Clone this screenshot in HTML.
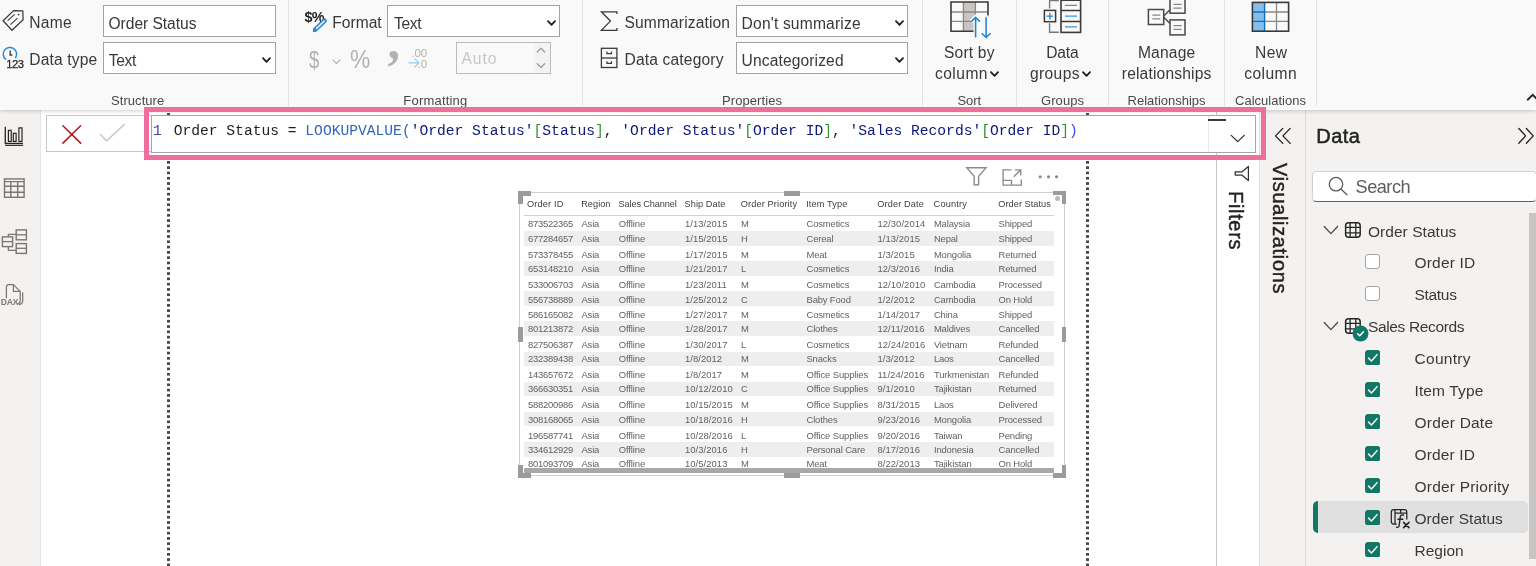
<!DOCTYPE html>
<html lang="en"><head><meta charset="utf-8"><title>Power BI - Order Status</title>
<style>
html,body{margin:0;padding:0}
body{width:1536px;height:566px;overflow:hidden;position:relative;background:#fff;font-family:"Liberation Sans",sans-serif;color:#252423}
#app{position:absolute;left:0;top:0;width:1536px;height:566px;overflow:hidden;will-change:opacity}
.a{position:absolute;box-sizing:border-box}
.t{position:absolute;white-space:pre;line-height:1}
.mono{font-family:"Liberation Mono",monospace}
.sep{position:absolute;top:0;width:1px;height:106px;background:#e2e2e2}
.inp{background:#fff;border:1px solid #a4a2a0}
</style></head><body>
<div id="app">
<div class="a " style="left:0.0px;top:110.0px;width:41.0px;height:456.0px;background:#f3f2f1;border-right:1px solid #e6e5e4"></div>
<div class="a " style="left:1215.5px;top:110.0px;width:44.0px;height:456.0px;background:#fff;border-left:1px solid #c8c6c4"></div>
<div class="a " style="left:1259.0px;top:110.0px;width:46.5px;height:456.0px;background:#f3f2f1;border-left:1px solid #e1dfdd"></div>
<div class="a " style="left:1305.0px;top:110.0px;width:231.0px;height:456.0px;background:#f3f2f1;border-left:1px solid #dddbd9"></div>
<div class="a " style="left:0.0px;top:0.0px;width:1536.0px;height:109.5px;background:#f9f9f9;box-shadow:0 1px 4px rgba(0,0,0,.2)"></div>
<div class="sep" style="left:288.3px"></div>
<div class="sep" style="left:582.0px"></div>
<div class="sep" style="left:922.0px"></div>
<div class="sep" style="left:1016.3px"></div>
<div class="sep" style="left:1108.0px"></div>
<div class="sep" style="left:1224.0px"></div>
<div class="sep" style="left:1316.0px"></div>
<span class="t " style="left:29.3px;top:14.89px;font-size:15.60px;color:#3a3938;letter-spacing:0.296px;">Name</span>
<span class="t " style="left:29.3px;top:52.09px;font-size:15.60px;color:#3a3938;letter-spacing:0.154px;">Data type</span>
<div class="a inp" style="left:103.0px;top:5.0px;width:172.5px;height:32.0px;"></div>
<div class="a inp" style="left:103.0px;top:42.0px;width:172.5px;height:32.0px;"></div>
<span class="t " style="left:108.5px;top:15.89px;font-size:15.60px;color:#3a3938;letter-spacing:-0.039px;">Order Status</span>
<span class="t " style="left:108.8px;top:52.99px;font-size:15.60px;color:#3a3938;letter-spacing:-0.336px;">Text</span>
<span class="t " style="left:111.0px;top:93.70px;font-size:13.00px;color:#4a4948;letter-spacing:0.057px;">Structure</span>
<span class="t " style="left:332.2px;top:14.89px;font-size:15.60px;color:#3a3938;letter-spacing:0.019px;">Format</span>
<div class="a inp" style="left:387.0px;top:5.0px;width:172.8px;height:32.0px;"></div>
<span class="t " style="left:394.0px;top:15.89px;font-size:15.60px;color:#3a3938;letter-spacing:-0.336px;">Text</span>
<div class="a " style="left:456.0px;top:42.0px;width:94.5px;height:32.0px;background:#f9f9f9;border:1px solid #bdbbb9"></div>
<span class="t " style="left:461.5px;top:51.09px;font-size:15.60px;color:#c8c6c4;letter-spacing:0.970px;">Auto</span>
<span class="t " style="left:403.3px;top:93.70px;font-size:13.00px;color:#4a4948;letter-spacing:0.207px;">Formatting</span>
<span class="t " style="left:624.5px;top:14.89px;font-size:15.60px;color:#3a3938;letter-spacing:0.122px;">Summarization</span>
<span class="t " style="left:624.5px;top:52.09px;font-size:15.60px;color:#3a3938;letter-spacing:0.157px;">Data category</span>
<div class="a inp" style="left:735.8px;top:5.0px;width:172.4px;height:32.0px;"></div>
<div class="a inp" style="left:735.8px;top:42.0px;width:172.4px;height:32.0px;"></div>
<span class="t " style="left:741.6px;top:15.89px;font-size:15.60px;color:#3a3938;letter-spacing:0.176px;">Don't summarize</span>
<span class="t " style="left:741.6px;top:52.99px;font-size:15.60px;color:#3a3938;letter-spacing:0.118px;">Uncategorized</span>
<span class="t " style="left:722.0px;top:93.70px;font-size:13.00px;color:#4a4948;letter-spacing:0.083px;">Properties</span>
<span class="t " style="left:944.0px;top:45.29px;font-size:15.60px;color:#3a3938;letter-spacing:0.180px;">Sort by</span>
<span class="t " style="left:935.0px;top:65.89px;font-size:15.60px;color:#3a3938;letter-spacing:0.443px;">column</span>
<span class="t " style="left:957.5px;top:93.70px;font-size:13.00px;color:#4a4948;letter-spacing:-0.114px;">Sort</span>
<span class="t " style="left:1046.2px;top:45.29px;font-size:15.60px;color:#3a3938;letter-spacing:-0.150px;">Data</span>
<span class="t " style="left:1030.0px;top:65.89px;font-size:15.60px;color:#3a3938;letter-spacing:0.361px;">groups</span>
<span class="t " style="left:1041.0px;top:93.70px;font-size:13.00px;color:#4a4948;letter-spacing:0.073px;">Groups</span>
<span class="t " style="left:1137.9px;top:45.29px;font-size:15.60px;color:#3a3938;letter-spacing:0.185px;">Manage</span>
<span class="t " style="left:1121.8px;top:65.89px;font-size:15.60px;color:#3a3938;letter-spacing:0.160px;">relationships</span>
<span class="t " style="left:1127.6px;top:93.70px;font-size:13.00px;color:#4a4948;letter-spacing:-0.004px;">Relationships</span>
<span class="t " style="left:1255.0px;top:45.29px;font-size:15.60px;color:#3a3938;letter-spacing:0.396px;">New</span>
<span class="t " style="left:1244.2px;top:65.89px;font-size:15.60px;color:#3a3938;letter-spacing:0.443px;">column</span>
<span class="t " style="left:1235.0px;top:93.70px;font-size:13.00px;color:#4a4948;letter-spacing:0.016px;">Calculations</span>
<svg class="a" style="left:262.2px;top:57.2px;" width="9" height="7" viewBox="0 0 9 7" fill="none"><path d="M1 1.2 L4.5 4.9 L8 1.2" stroke="#201f1e" stroke-width="1.8" stroke-linecap="round" stroke-linejoin="round"/></svg>
<svg class="a" style="left:546.8px;top:20.2px;" width="9" height="7" viewBox="0 0 9 7" fill="none"><path d="M1 1.2 L4.5 4.9 L8 1.2" stroke="#201f1e" stroke-width="1.8" stroke-linecap="round" stroke-linejoin="round"/></svg>
<svg class="a" style="left:895.0px;top:20.2px;" width="9" height="7" viewBox="0 0 9 7" fill="none"><path d="M1 1.2 L4.5 4.9 L8 1.2" stroke="#201f1e" stroke-width="1.8" stroke-linecap="round" stroke-linejoin="round"/></svg>
<svg class="a" style="left:895.0px;top:57.2px;" width="9" height="7" viewBox="0 0 9 7" fill="none"><path d="M1 1.2 L4.5 4.9 L8 1.2" stroke="#201f1e" stroke-width="1.8" stroke-linecap="round" stroke-linejoin="round"/></svg>
<svg class="a" style="left:989.5px;top:71.0px;" width="9" height="7" viewBox="0 0 9 7" fill="none"><path d="M1 1.2 L4.5 4.9 L8 1.2" stroke="#201f1e" stroke-width="1.8" stroke-linecap="round" stroke-linejoin="round"/></svg>
<svg class="a" style="left:1081.5px;top:71.0px;" width="9" height="7" viewBox="0 0 9 7" fill="none"><path d="M1 1.2 L4.5 4.9 L8 1.2" stroke="#201f1e" stroke-width="1.8" stroke-linecap="round" stroke-linejoin="round"/></svg>
<svg class="a" style="left:0.0px;top:8.0px;" width="26" height="24" viewBox="0 0 26 24" fill="none"><path d="M3.1 12.8 L13.6 2.6 L22.8 2.8 L23.1 11.8 L12 22.3 Z" stroke="#3b3a39" stroke-width="1.25" stroke-linejoin="round"/><circle cx="18.6" cy="6.6" r="0.9" fill="#3b3a39"/><path d="M7.6 12.6 L14.6 6.3 M10.4 16.6 L17.6 10.1" stroke="#3b3a39" stroke-width="1.1"/></svg>
<svg class="a" style="left:0.0px;top:45.0px;" width="26" height="26" viewBox="0 0 26 26" fill="none"><path d="M5.6 14.3 A6.7 6.7 0 1 1 15.7 12.6" stroke="#2b88d8" stroke-width="1.5" stroke-linecap="round"/><path d="M10.1 5.6 V10 H12.4" stroke="#3b3a39" stroke-width="1.3"/><text x="6.3" y="23.2" font-family="Liberation Sans, sans-serif" font-size="11.2" letter-spacing="-0.55" fill="#252423" stroke="#252423" stroke-width="0.25">123</text></svg>
<span class="t" style="left:304.4px;top:9.8px;font-size:14.4px;font-weight:bold;color:#201f1e;letter-spacing:-0.7px">$%</span>
<svg class="a" style="left:311.0px;top:16.0px;" width="18" height="18" viewBox="0 0 18 18" fill="none"><path d="M4.2 13.6 L13.6 4.8" stroke="#2b88d8" stroke-width="4.6" stroke-linecap="round"/><path d="M5.6 12.4 L13.2 5.2" stroke="#d6e9f8" stroke-width="1.7" stroke-linecap="round"/><path d="M1.6 16.2 L2.6 12.2 L5.8 15.2 Z" fill="#2b88d8"/></svg>
<span class="t" style="left:308.5px;top:47.6px;font-size:23.8px;color:#b4b2b0;transform-origin:0 0;transform:scaleX(0.78)">$</span>
<svg class="a" style="left:332.0px;top:58.6px;" width="9" height="6" viewBox="0 0 9 6" fill="none"><path d="M0.9 0.9 L4.5 4.5 L8.1 0.9" stroke="#b4b2b0" stroke-width="1.1" stroke-linecap="round" stroke-linejoin="round"/></svg>
<span class="t" style="left:349.6px;top:46.0px;font-size:26.4px;color:#b4b2b0;transform-origin:0 0;transform:scaleX(0.865)">%</span>
<span class="t" style="left:387.5px;top:15.9px;font-size:50px;font-weight:bold;font-family:'Liberation Serif',serif;color:#b4b2b0">,</span>
<span class="t" style="left:411.3px;top:46.8px;font-size:11.6px;color:#b4b2b0;letter-spacing:-0.1px">.00</span>
<span class="t" style="left:417.6px;top:58.0px;font-size:11.6px;color:#b4b2b0;letter-spacing:-0.1px">.0</span>
<svg class="a" style="left:407.5px;top:58.0px;" width="13" height="10" viewBox="0 0 13 10" fill="none"><path d="M0.8 4.9 H11 M7 1 L11 4.9 L7 8.8" stroke="#9ccbe9" stroke-width="1.2" stroke-linecap="round" stroke-linejoin="round"/></svg>
<div class="a " style="left:534.0px;top:43.0px;width:15.5px;height:30.0px;background:#f3f3f3"></div>
<svg class="a" style="left:536.0px;top:45.0px;" width="10" height="25" viewBox="0 0 10 25" fill="none"><path d="M1.3 7 L5 3.3 L8.7 7 M1.3 18.8 L5 22.5 L8.7 18.8" stroke="#a19f9d" stroke-width="1.4" stroke-linecap="round" stroke-linejoin="round"/></svg>
<svg class="a" style="left:599.0px;top:9.0px;" width="20" height="24" viewBox="0 0 20 24" fill="none"><path d="M17.9 5 V2.8 H2.4 L11.4 12.1 L2.4 21.4 H17.9 V19" stroke="#3b3a39" stroke-width="1.3" stroke-linejoin="miter"/></svg>
<svg class="a" style="left:599.0px;top:46.0px;" width="20" height="24" viewBox="0 0 20 24" fill="none"><rect x="2.4" y="2.3" width="15.5" height="19.2" stroke="#3b3a39" stroke-width="1.3"/><path d="M2.4 12 H17.9" stroke="#3b3a39" stroke-width="1.3"/><path d="M7.9 5.4 V7.6 H12.5 V5.4 M7.9 15.2 V17.3 H12.5 V15.2" stroke="#3b3a39" stroke-width="1.2"/></svg>
<svg class="a" style="left:948.0px;top:0.0px;" width="46" height="40" viewBox="0 0 46 40" fill="none"><rect x="15.4" y="2" width="12" height="29.2" fill="#c8c6c4"/><path d="M3 12 H40 M3 21.4 H27 M15.4 2 V31.2 M27.4 2 V17" stroke="#8a8886" stroke-width="1.3"/><path d="M40 15.6 V2 H3 V31.2 H26" stroke="#3b3a39" stroke-width="1.6"/><path d="M23.3 21.4 L27.6 17.2 L31.8 21.4 M27.6 17.2 V37.6" stroke="#f9f9f9" stroke-width="4.2"/><path d="M23.3 21.6 L27.6 17.3 L31.8 21.6 M27.6 17.5 V37.6 M33.7 33.2 L38.1 37.5 L42.6 33.2 M38.1 17.2 V37.3" stroke="#1f85d3" stroke-width="1.55"/></svg>
<svg class="a" style="left:1042.0px;top:0.0px;" width="42" height="35" viewBox="0 0 42 35" fill="none"><path d="M16.8 0.6 H7.6 V8.6 M7.6 23.2 V32.2 H16.8" stroke="#797775" stroke-width="1.4"/><rect x="2.4" y="10.4" width="11.2" height="11.3" stroke="#3b3a39" stroke-width="1.5"/><path d="M4.6 16.1 H11.2 M7.9 12.8 V19.4" stroke="#1f85d3" stroke-width="1.3"/><rect x="19" y="0.2" width="19.6" height="32.2" stroke="#3b3a39" stroke-width="1.6"/><path d="M19 10.6 H38.6 M19 21.5 H38.6" stroke="#3b3a39" stroke-width="1.5"/><path d="M23 5.3 H35 M23 16.1 H35 M23 26.9 H35" stroke="#3a96dd" stroke-width="1.3"/></svg>
<svg class="a" style="left:1146.0px;top:0.0px;" width="42" height="37" viewBox="0 0 42 37" fill="none"><rect x="2.4" y="9.5" width="15.3" height="15" stroke="#4a4846" stroke-width="1.5"/><rect x="24" y="-2" width="15" height="15.2" stroke="#4a4846" stroke-width="1.5"/><rect x="24" y="19.9" width="15" height="15" stroke="#4a4846" stroke-width="1.5"/><path d="M17.8 16 L24 9.8 M17.8 17.3 L24 23.5" stroke="#4a4846" stroke-width="1.4"/><path d="M6.3 15.1 H14.3 M6.3 18.8 H14.3 M27.4 4.4 H35.7 M27.4 8.1 H35.7 M27.4 25.6 H35.7 M27.4 29.3 H35.7" stroke="#8a8886" stroke-width="1.2"/></svg>
<svg class="a" style="left:1250.0px;top:0.0px;" width="42" height="34" viewBox="0 0 42 34" fill="none"><rect x="2.4" y="2.4" width="12.2" height="28.8" fill="#83beec"/><path d="M14.6 12 H38.6 M14.6 21.4 H38.6 M26.5 2.4 V31.2" stroke="#8a8886" stroke-width="1.3"/><path d="M2.4 12 H14.6 M2.4 21.4 H14.6 M14.6 2.4 V31.2" stroke="#106ebe" stroke-width="1.4"/><rect x="2.4" y="2.4" width="36.2" height="28.8" stroke="#3b3a39" stroke-width="1.6"/></svg>
<svg class="a" style="left:1524.0px;top:92.0px;" width="14" height="11" viewBox="0 0 14 11" fill="none"><path d="M3.2 8.2 L8.7 2.9 L14.2 8.2" stroke="#252423" stroke-width="1.9" stroke-linejoin="miter"/></svg>
<svg class="a" style="left:2.0px;top:124.0px;" width="26" height="24" viewBox="0 0 26 24" fill="none"><path d="M3.3 2.8 V19.4 H21" stroke="#252423" stroke-width="1.3"/><path d="M3 21.3 H21.2" stroke="#252423" stroke-width="1.2"/><rect x="6.4" y="6.4" width="2.8" height="11" stroke="#252423" stroke-width="1.2"/><rect x="11.3" y="9.3" width="2.8" height="8.1" stroke="#252423" stroke-width="1.2"/><rect x="16.9" y="3.9" width="3.1" height="13.5" stroke="#252423" stroke-width="1.2"/></svg>
<svg class="a" style="left:2.0px;top:176.0px;" width="26" height="24" viewBox="0 0 26 24" fill="none"><rect x="2.5" y="2.9" width="19.6" height="18.4" stroke="#797775" stroke-width="1.4"/><path d="M2.5 5.6 H22.1 M2.5 10.3 H22.1 M2.5 16.2 H22.1 M8.8 5.6 V21.3 M15.7 5.6 V21.3" stroke="#797775" stroke-width="1.4"/></svg>
<svg class="a" style="left:0.0px;top:227.0px;" width="30" height="29" viewBox="0 0 30 29" fill="none"><rect x="2.4" y="9.9" width="10.2" height="9.7" stroke="#797775" stroke-width="1.4"/><path d="M2.4 14.6 H12.6" stroke="#797775" stroke-width="1.3"/><rect x="16.2" y="2.9" width="10.2" height="9.9" stroke="#797775" stroke-width="1.4"/><path d="M16.2 7.8 H26.4" stroke="#797775" stroke-width="1.3"/><rect x="16.2" y="16.6" width="10.2" height="9.8" stroke="#797775" stroke-width="1.4"/><path d="M16.2 21.3 H26.4" stroke="#797775" stroke-width="1.3"/><path d="M8.4 9.9 V7.4 H16.2 M8.4 19.6 V23.3 H16.2" stroke="#797775" stroke-width="1.3"/></svg>
<svg class="a" style="left:0.0px;top:282.0px;" width="28" height="26" viewBox="0 0 28 26" fill="none"><path d="M6.4 16.2 V5 Q6.4 2.5 8.9 2.5 H13.4 L20.2 9.4 V18.8 Q20.2 21.6 17.6 21.9" stroke="#797775" stroke-width="1.25"/><path d="M13.4 2.5 V9.4 H20.2" stroke="#797775" stroke-width="1.2"/><path d="M22.7 10.4 V18.6 Q22.7 22.4 19 22.6" stroke="#797775" stroke-width="1.25"/><text x="0.7" y="23.4" font-family="Liberation Sans, sans-serif" font-size="8.6" font-weight="bold" letter-spacing="-0.2" fill="#797775">DAX</text></svg>
<div class="a " style="left:46.0px;top:115.3px;width:1210.0px;height:37.2px;background:#fff;border:1px solid #c8c6c4"></div>
<svg class="a" style="left:61.0px;top:123.5px;" width="22" height="21" viewBox="0 0 22 21" fill="none"><path d="M1.9 1.7 L19.6 19.1 M19.6 1.7 L1.9 19.1" stroke="#b3161b" stroke-width="1.5" stroke-linecap="round"/></svg>
<svg class="a" style="left:99.1px;top:123.1px;" width="27" height="20" viewBox="0 0 27 20" fill="none"><path d="M1.5 11.5 L7.5 18 L25.3 1.5" stroke="#c8c6c4" stroke-width="1.5" stroke-linecap="round" stroke-linejoin="round"/></svg>
<div class="a " style="left:151.3px;top:115.3px;width:1104.7px;height:38.2px;background:#fff;border:1px solid #a6a6a6"></div>
<div class="a " style="left:1208.0px;top:116.3px;width:1.0px;height:36.2px;background:#e8e8e8"></div>
<div class="a " style="left:1208.3px;top:119.2px;width:17.7px;height:2.2px;background:#3b3a39"></div>
<svg class="a" style="left:1230.0px;top:134.0px;" width="16" height="9" viewBox="0 0 16 9" fill="none"><path d="M1.2 1.4 L7.7 7.6 L14.2 1.4" stroke="#323130" stroke-width="1.3" stroke-linecap="round" stroke-linejoin="round"/></svg>
<div class="a mono" style="left:173.70px;top:124.31px;font-size:14.64px;line-height:1;white-space:pre;color:#1f1f1f"><span style="color:#1f1f1f">Order Status = </span><span style="color:#3165bb">LOOKUPVALUE(</span><span style="color:#0b1a7a">'Order Status'</span><span style="color:#319331">[</span><span style="color:#0b1a7a">Status</span><span style="color:#319331">]</span><span style="color:#1f1f1f">, </span><span style="color:#0b1a7a">'Order Status'</span><span style="color:#319331">[</span><span style="color:#0b1a7a">Order ID</span><span style="color:#319331">]</span><span style="color:#1f1f1f">, </span><span style="color:#0b1a7a">'Sales Records'</span><span style="color:#319331">[</span><span style="color:#0b1a7a">Order ID</span><span style="color:#319331">]</span><span style="color:#3c4bf0">)</span></div>
<span class="t mono" style="left:153.00px;top:124.31px;font-size:14.64px;color:#3a4aa8">1</span>
<div class="a " style="left:144.2px;top:107.2px;width:1122.0px;height:52.8px;border:solid #ee6f9e;border-width:5.5px 5.3px 5.5px 5.5px"></div>
<div class="a " style="left:167.0px;top:161.0px;width:3.0px;height:405.0px;background-image:linear-gradient(#484848 0,#484848 3px,transparent 3px);background-size:3px 5.3px;background-repeat:repeat-y"></div>
<div class="a " style="left:1086.2px;top:161.0px;width:3.0px;height:405.0px;background-image:linear-gradient(#484848 0,#484848 3px,transparent 3px);background-size:3px 5.3px;background-repeat:repeat-y"></div>
<div class="a " style="left:167.0px;top:112.8px;width:3.0px;height:2.6px;background:#484848"></div>
<div class="a " style="left:1086.2px;top:112.8px;width:3.0px;height:2.6px;background:#484848"></div>
<div class="a " style="left:519.3px;top:192.3px;width:545.7px;height:283.4px;border:1px solid #d2d0ce;background:#fff"></div>
<svg class="a" style="left:964.5px;top:166.0px;" width="23" height="21" viewBox="0 0 23 21" fill="none"><path d="M1.7 1.7 H21.1 L13.6 10.2 V18.7 H9.2 V10.2 Z" stroke="#8d8b89" stroke-width="1.35" stroke-linejoin="miter"/></svg>
<svg class="a" style="left:1002.0px;top:167.5px;" width="21" height="19" viewBox="0 0 21 19" fill="none"><path d="M9.5 1.8 H1.1 V17.1 H19.3 V11.5 M1.1 12.4 H9.5 V17.1 M13 1.8 H18.8 V7.5 M18.8 1.8 L11.7 8.8" stroke="#8d8b89" stroke-width="1.35"/></svg>
<svg class="a" style="left:1037.0px;top:173.5px;" width="23" height="6" viewBox="0 0 23 6" fill="none"><circle cx="3.2" cy="2.8" r="1.6" fill="#8d8b89"/><circle cx="11.5" cy="2.8" r="1.6" fill="#8d8b89"/><circle cx="19.5" cy="2.8" r="1.6" fill="#8d8b89"/></svg>
<div class="a" style="left:520.3px;top:193.3px;width:543.7px;height:274.7px;overflow:hidden">
<div class="a " style="left:3.4px;top:37.3px;width:530.6px;height:15.2px;background:#eeeeee"></div>
<div class="a " style="left:3.4px;top:67.7px;width:530.6px;height:15.3px;background:#eeeeee"></div>
<div class="a " style="left:3.4px;top:97.8px;width:530.6px;height:15.4px;background:#eeeeee"></div>
<div class="a " style="left:3.4px;top:128.0px;width:530.6px;height:14.8px;background:#eeeeee"></div>
<div class="a " style="left:3.4px;top:158.7px;width:530.6px;height:13.9px;background:#eeeeee"></div>
<div class="a " style="left:3.4px;top:188.5px;width:530.6px;height:14.1px;background:#eeeeee"></div>
<div class="a " style="left:3.4px;top:218.6px;width:530.6px;height:14.5px;background:#eeeeee"></div>
<div class="a " style="left:3.4px;top:249.1px;width:530.6px;height:14.2px;background:#eeeeee"></div>
<span class="t " style="left:6.7px;top:6.41px;font-size:9.20px;color:#404040;letter-spacing:0.161px;">Order ID</span>
<span class="t " style="left:60.9px;top:6.41px;font-size:9.20px;color:#404040;letter-spacing:0.030px;">Region</span>
<span class="t " style="left:98.2px;top:6.41px;font-size:9.20px;color:#404040;letter-spacing:-0.120px;">Sales Channel</span>
<span class="t " style="left:164.3px;top:6.41px;font-size:9.20px;color:#404040;letter-spacing:0.050px;">Ship Date</span>
<span class="t " style="left:220.5px;top:6.41px;font-size:9.20px;color:#404040;letter-spacing:0.124px;">Order Priority</span>
<span class="t " style="left:285.9px;top:6.41px;font-size:9.20px;color:#404040;letter-spacing:0.122px;">Item Type</span>
<span class="t " style="left:356.9px;top:6.41px;font-size:9.20px;color:#404040;letter-spacing:0.144px;">Order Date</span>
<span class="t " style="left:413.3px;top:6.41px;font-size:9.20px;color:#404040;letter-spacing:0.198px;">Country</span>
<span class="t " style="left:478.0px;top:6.41px;font-size:9.20px;color:#404040;letter-spacing:0.041px;">Order Status</span>
<div class="a " style="left:3.4px;top:21.8px;width:530.6px;height:1.0px;background:#b9d7f3"></div>
<span class="t " style="left:7.7px;top:26.20px;font-size:9.45px;color:#626262;letter-spacing:-0.242px;">873522365</span>
<span class="t " style="left:61.2px;top:26.20px;font-size:9.45px;color:#626262;letter-spacing:-0.162px;">Asia</span>
<span class="t " style="left:98.5px;top:26.20px;font-size:9.45px;color:#626262;letter-spacing:-0.119px;">Offline</span>
<span class="t " style="left:164.6px;top:26.20px;font-size:9.45px;color:#626262;letter-spacing:0.066px;">1/13/2015</span>
<span class="t " style="left:220.8px;top:26.20px;font-size:9.45px;color:#626262;">M</span>
<span class="t " style="left:286.2px;top:26.20px;font-size:9.45px;color:#626262;letter-spacing:-0.146px;">Cosmetics</span>
<span class="t " style="left:357.2px;top:26.20px;font-size:9.45px;color:#626262;letter-spacing:0.066px;">12/30/2014</span>
<span class="t " style="left:413.6px;top:26.20px;font-size:9.45px;color:#626262;letter-spacing:-0.141px;">Malaysia</span>
<span class="t " style="left:478.3px;top:26.20px;font-size:9.45px;color:#626262;letter-spacing:-0.153px;">Shipped</span>
<span class="t " style="left:7.7px;top:41.20px;font-size:9.45px;color:#626262;letter-spacing:-0.242px;">677284657</span>
<span class="t " style="left:61.2px;top:41.20px;font-size:9.45px;color:#626262;letter-spacing:-0.162px;">Asia</span>
<span class="t " style="left:98.5px;top:41.20px;font-size:9.45px;color:#626262;letter-spacing:-0.119px;">Offline</span>
<span class="t " style="left:164.6px;top:41.20px;font-size:9.45px;color:#626262;letter-spacing:0.066px;">1/15/2015</span>
<span class="t " style="left:220.8px;top:41.20px;font-size:9.45px;color:#626262;">H</span>
<span class="t " style="left:286.2px;top:41.20px;font-size:9.45px;color:#626262;letter-spacing:-0.147px;">Cereal</span>
<span class="t " style="left:357.2px;top:41.20px;font-size:9.45px;color:#626262;letter-spacing:0.066px;">1/13/2015</span>
<span class="t " style="left:413.6px;top:41.20px;font-size:9.45px;color:#626262;letter-spacing:-0.163px;">Nepal</span>
<span class="t " style="left:478.3px;top:41.20px;font-size:9.45px;color:#626262;letter-spacing:-0.153px;">Shipped</span>
<span class="t " style="left:7.7px;top:57.20px;font-size:9.45px;color:#626262;letter-spacing:-0.242px;">573378455</span>
<span class="t " style="left:61.2px;top:57.20px;font-size:9.45px;color:#626262;letter-spacing:-0.162px;">Asia</span>
<span class="t " style="left:98.5px;top:57.20px;font-size:9.45px;color:#626262;letter-spacing:-0.119px;">Offline</span>
<span class="t " style="left:164.6px;top:57.20px;font-size:9.45px;color:#626262;letter-spacing:0.066px;">1/17/2015</span>
<span class="t " style="left:220.8px;top:57.20px;font-size:9.45px;color:#626262;">M</span>
<span class="t " style="left:286.2px;top:57.20px;font-size:9.45px;color:#626262;letter-spacing:-0.185px;">Meat</span>
<span class="t " style="left:357.2px;top:57.20px;font-size:9.45px;color:#626262;letter-spacing:0.066px;">1/3/2015</span>
<span class="t " style="left:413.6px;top:57.20px;font-size:9.45px;color:#626262;letter-spacing:-0.145px;">Mongolia</span>
<span class="t " style="left:478.3px;top:57.20px;font-size:9.45px;color:#626262;letter-spacing:-0.147px;">Returned</span>
<span class="t " style="left:7.7px;top:71.20px;font-size:9.45px;color:#626262;letter-spacing:-0.242px;">653148210</span>
<span class="t " style="left:61.2px;top:71.20px;font-size:9.45px;color:#626262;letter-spacing:-0.162px;">Asia</span>
<span class="t " style="left:98.5px;top:71.20px;font-size:9.45px;color:#626262;letter-spacing:-0.119px;">Offline</span>
<span class="t " style="left:164.6px;top:71.20px;font-size:9.45px;color:#626262;letter-spacing:0.066px;">1/21/2017</span>
<span class="t " style="left:220.8px;top:71.20px;font-size:9.45px;color:#626262;">L</span>
<span class="t " style="left:286.2px;top:71.20px;font-size:9.45px;color:#626262;letter-spacing:-0.146px;">Cosmetics</span>
<span class="t " style="left:357.2px;top:71.20px;font-size:9.45px;color:#626262;letter-spacing:0.066px;">12/3/2016</span>
<span class="t " style="left:413.6px;top:71.20px;font-size:9.45px;color:#626262;letter-spacing:-0.135px;">India</span>
<span class="t " style="left:478.3px;top:71.20px;font-size:9.45px;color:#626262;letter-spacing:-0.147px;">Returned</span>
<span class="t " style="left:7.7px;top:87.20px;font-size:9.45px;color:#626262;letter-spacing:-0.242px;">533006703</span>
<span class="t " style="left:61.2px;top:87.20px;font-size:9.45px;color:#626262;letter-spacing:-0.162px;">Asia</span>
<span class="t " style="left:98.5px;top:87.20px;font-size:9.45px;color:#626262;letter-spacing:-0.119px;">Offline</span>
<span class="t " style="left:164.6px;top:87.20px;font-size:9.45px;color:#626262;letter-spacing:0.065px;">1/23/2011</span>
<span class="t " style="left:220.8px;top:87.20px;font-size:9.45px;color:#626262;">M</span>
<span class="t " style="left:286.2px;top:87.20px;font-size:9.45px;color:#626262;letter-spacing:-0.146px;">Cosmetics</span>
<span class="t " style="left:357.2px;top:87.20px;font-size:9.45px;color:#626262;letter-spacing:0.066px;">12/10/2010</span>
<span class="t " style="left:413.6px;top:87.20px;font-size:9.45px;color:#626262;letter-spacing:-0.163px;">Cambodia</span>
<span class="t " style="left:478.3px;top:87.20px;font-size:9.45px;color:#626262;letter-spacing:-0.147px;">Processed</span>
<span class="t " style="left:7.7px;top:102.20px;font-size:9.45px;color:#626262;letter-spacing:-0.242px;">556738889</span>
<span class="t " style="left:61.2px;top:102.20px;font-size:9.45px;color:#626262;letter-spacing:-0.162px;">Asia</span>
<span class="t " style="left:98.5px;top:102.20px;font-size:9.45px;color:#626262;letter-spacing:-0.119px;">Offline</span>
<span class="t " style="left:164.6px;top:102.20px;font-size:9.45px;color:#626262;letter-spacing:0.066px;">1/25/2012</span>
<span class="t " style="left:220.8px;top:102.20px;font-size:9.45px;color:#626262;">C</span>
<span class="t " style="left:286.2px;top:102.20px;font-size:9.45px;color:#626262;letter-spacing:-0.151px;">Baby Food</span>
<span class="t " style="left:357.2px;top:102.20px;font-size:9.45px;color:#626262;letter-spacing:0.066px;">1/2/2012</span>
<span class="t " style="left:413.6px;top:102.20px;font-size:9.45px;color:#626262;letter-spacing:-0.163px;">Cambodia</span>
<span class="t " style="left:478.3px;top:102.20px;font-size:9.45px;color:#626262;letter-spacing:-0.153px;">On Hold</span>
<span class="t " style="left:7.7px;top:117.20px;font-size:9.45px;color:#626262;letter-spacing:-0.242px;">586165082</span>
<span class="t " style="left:61.2px;top:117.20px;font-size:9.45px;color:#626262;letter-spacing:-0.162px;">Asia</span>
<span class="t " style="left:98.5px;top:117.20px;font-size:9.45px;color:#626262;letter-spacing:-0.119px;">Offline</span>
<span class="t " style="left:164.6px;top:117.20px;font-size:9.45px;color:#626262;letter-spacing:0.066px;">1/27/2017</span>
<span class="t " style="left:220.8px;top:117.20px;font-size:9.45px;color:#626262;">M</span>
<span class="t " style="left:286.2px;top:117.20px;font-size:9.45px;color:#626262;letter-spacing:-0.146px;">Cosmetics</span>
<span class="t " style="left:357.2px;top:117.20px;font-size:9.45px;color:#626262;letter-spacing:0.066px;">1/14/2017</span>
<span class="t " style="left:413.6px;top:117.20px;font-size:9.45px;color:#626262;letter-spacing:-0.163px;">China</span>
<span class="t " style="left:478.3px;top:117.20px;font-size:9.45px;color:#626262;letter-spacing:-0.153px;">Shipped</span>
<span class="t " style="left:7.7px;top:131.20px;font-size:9.45px;color:#626262;letter-spacing:-0.242px;">801213872</span>
<span class="t " style="left:61.2px;top:131.20px;font-size:9.45px;color:#626262;letter-spacing:-0.162px;">Asia</span>
<span class="t " style="left:98.5px;top:131.20px;font-size:9.45px;color:#626262;letter-spacing:-0.119px;">Offline</span>
<span class="t " style="left:164.6px;top:131.20px;font-size:9.45px;color:#626262;letter-spacing:0.066px;">1/28/2017</span>
<span class="t " style="left:220.8px;top:131.20px;font-size:9.45px;color:#626262;">M</span>
<span class="t " style="left:286.2px;top:131.20px;font-size:9.45px;color:#626262;letter-spacing:-0.141px;">Clothes</span>
<span class="t " style="left:357.2px;top:131.20px;font-size:9.45px;color:#626262;letter-spacing:0.065px;">12/11/2016</span>
<span class="t " style="left:413.6px;top:131.20px;font-size:9.45px;color:#626262;letter-spacing:-0.141px;">Maldives</span>
<span class="t " style="left:478.3px;top:131.20px;font-size:9.45px;color:#626262;letter-spacing:-0.139px;">Cancelled</span>
<span class="t " style="left:7.7px;top:147.20px;font-size:9.45px;color:#626262;letter-spacing:-0.242px;">827506387</span>
<span class="t " style="left:61.2px;top:147.20px;font-size:9.45px;color:#626262;letter-spacing:-0.162px;">Asia</span>
<span class="t " style="left:98.5px;top:147.20px;font-size:9.45px;color:#626262;letter-spacing:-0.119px;">Offline</span>
<span class="t " style="left:164.6px;top:147.20px;font-size:9.45px;color:#626262;letter-spacing:0.066px;">1/30/2017</span>
<span class="t " style="left:220.8px;top:147.20px;font-size:9.45px;color:#626262;">L</span>
<span class="t " style="left:286.2px;top:147.20px;font-size:9.45px;color:#626262;letter-spacing:-0.146px;">Cosmetics</span>
<span class="t " style="left:357.2px;top:147.20px;font-size:9.45px;color:#626262;letter-spacing:0.066px;">12/24/2016</span>
<span class="t " style="left:413.6px;top:147.20px;font-size:9.45px;color:#626262;letter-spacing:-0.152px;">Vietnam</span>
<span class="t " style="left:478.3px;top:147.20px;font-size:9.45px;color:#626262;letter-spacing:-0.155px;">Refunded</span>
<span class="t " style="left:7.7px;top:161.20px;font-size:9.45px;color:#626262;letter-spacing:-0.242px;">232389438</span>
<span class="t " style="left:61.2px;top:161.20px;font-size:9.45px;color:#626262;letter-spacing:-0.162px;">Asia</span>
<span class="t " style="left:98.5px;top:161.20px;font-size:9.45px;color:#626262;letter-spacing:-0.119px;">Offline</span>
<span class="t " style="left:164.6px;top:161.20px;font-size:9.45px;color:#626262;letter-spacing:0.066px;">1/8/2012</span>
<span class="t " style="left:220.8px;top:161.20px;font-size:9.45px;color:#626262;">M</span>
<span class="t " style="left:286.2px;top:161.20px;font-size:9.45px;color:#626262;letter-spacing:-0.164px;">Snacks</span>
<span class="t " style="left:357.2px;top:161.20px;font-size:9.45px;color:#626262;letter-spacing:0.066px;">1/3/2012</span>
<span class="t " style="left:413.6px;top:161.20px;font-size:9.45px;color:#626262;letter-spacing:-0.180px;">Laos</span>
<span class="t " style="left:478.3px;top:161.20px;font-size:9.45px;color:#626262;letter-spacing:-0.139px;">Cancelled</span>
<span class="t " style="left:7.7px;top:177.20px;font-size:9.45px;color:#626262;letter-spacing:-0.242px;">143657672</span>
<span class="t " style="left:61.2px;top:177.20px;font-size:9.45px;color:#626262;letter-spacing:-0.162px;">Asia</span>
<span class="t " style="left:98.5px;top:177.20px;font-size:9.45px;color:#626262;letter-spacing:-0.119px;">Offline</span>
<span class="t " style="left:164.6px;top:177.20px;font-size:9.45px;color:#626262;letter-spacing:0.066px;">1/8/2017</span>
<span class="t " style="left:220.8px;top:177.20px;font-size:9.45px;color:#626262;">M</span>
<span class="t " style="left:286.2px;top:177.20px;font-size:9.45px;color:#626262;letter-spacing:-0.120px;">Office Supplies</span>
<span class="t " style="left:357.2px;top:177.20px;font-size:9.45px;color:#626262;letter-spacing:0.065px;">11/24/2016</span>
<span class="t " style="left:413.6px;top:177.20px;font-size:9.45px;color:#626262;letter-spacing:-0.137px;">Turkmenistan</span>
<span class="t " style="left:478.3px;top:177.20px;font-size:9.45px;color:#626262;letter-spacing:-0.155px;">Refunded</span>
<span class="t " style="left:7.7px;top:191.20px;font-size:9.45px;color:#626262;letter-spacing:-0.242px;">366630351</span>
<span class="t " style="left:61.2px;top:191.20px;font-size:9.45px;color:#626262;letter-spacing:-0.162px;">Asia</span>
<span class="t " style="left:98.5px;top:191.20px;font-size:9.45px;color:#626262;letter-spacing:-0.119px;">Offline</span>
<span class="t " style="left:164.6px;top:191.20px;font-size:9.45px;color:#626262;letter-spacing:0.066px;">10/12/2010</span>
<span class="t " style="left:220.8px;top:191.20px;font-size:9.45px;color:#626262;">C</span>
<span class="t " style="left:286.2px;top:191.20px;font-size:9.45px;color:#626262;letter-spacing:-0.120px;">Office Supplies</span>
<span class="t " style="left:357.2px;top:191.20px;font-size:9.45px;color:#626262;letter-spacing:0.066px;">9/1/2010</span>
<span class="t " style="left:413.6px;top:191.20px;font-size:9.45px;color:#626262;letter-spacing:-0.114px;">Tajikistan</span>
<span class="t " style="left:478.3px;top:191.20px;font-size:9.45px;color:#626262;letter-spacing:-0.147px;">Returned</span>
<span class="t " style="left:7.7px;top:207.20px;font-size:9.45px;color:#626262;letter-spacing:-0.242px;">588200986</span>
<span class="t " style="left:61.2px;top:207.20px;font-size:9.45px;color:#626262;letter-spacing:-0.162px;">Asia</span>
<span class="t " style="left:98.5px;top:207.20px;font-size:9.45px;color:#626262;letter-spacing:-0.119px;">Offline</span>
<span class="t " style="left:164.6px;top:207.20px;font-size:9.45px;color:#626262;letter-spacing:0.066px;">10/15/2015</span>
<span class="t " style="left:220.8px;top:207.20px;font-size:9.45px;color:#626262;">M</span>
<span class="t " style="left:286.2px;top:207.20px;font-size:9.45px;color:#626262;letter-spacing:-0.120px;">Office Supplies</span>
<span class="t " style="left:357.2px;top:207.20px;font-size:9.45px;color:#626262;letter-spacing:0.066px;">8/31/2015</span>
<span class="t " style="left:413.6px;top:207.20px;font-size:9.45px;color:#626262;letter-spacing:-0.180px;">Laos</span>
<span class="t " style="left:478.3px;top:207.20px;font-size:9.45px;color:#626262;letter-spacing:-0.132px;">Delivered</span>
<span class="t " style="left:7.7px;top:222.20px;font-size:9.45px;color:#626262;letter-spacing:-0.242px;">308168065</span>
<span class="t " style="left:61.2px;top:222.20px;font-size:9.45px;color:#626262;letter-spacing:-0.162px;">Asia</span>
<span class="t " style="left:98.5px;top:222.20px;font-size:9.45px;color:#626262;letter-spacing:-0.119px;">Offline</span>
<span class="t " style="left:164.6px;top:222.20px;font-size:9.45px;color:#626262;letter-spacing:0.066px;">10/18/2016</span>
<span class="t " style="left:220.8px;top:222.20px;font-size:9.45px;color:#626262;">H</span>
<span class="t " style="left:286.2px;top:222.20px;font-size:9.45px;color:#626262;letter-spacing:-0.141px;">Clothes</span>
<span class="t " style="left:357.2px;top:222.20px;font-size:9.45px;color:#626262;letter-spacing:0.066px;">9/23/2016</span>
<span class="t " style="left:413.6px;top:222.20px;font-size:9.45px;color:#626262;letter-spacing:-0.145px;">Mongolia</span>
<span class="t " style="left:478.3px;top:222.20px;font-size:9.45px;color:#626262;letter-spacing:-0.147px;">Processed</span>
<span class="t " style="left:7.7px;top:238.20px;font-size:9.45px;color:#626262;letter-spacing:-0.242px;">196587741</span>
<span class="t " style="left:61.2px;top:238.20px;font-size:9.45px;color:#626262;letter-spacing:-0.162px;">Asia</span>
<span class="t " style="left:98.5px;top:238.20px;font-size:9.45px;color:#626262;letter-spacing:-0.119px;">Offline</span>
<span class="t " style="left:164.6px;top:238.20px;font-size:9.45px;color:#626262;letter-spacing:0.066px;">10/28/2016</span>
<span class="t " style="left:220.8px;top:238.20px;font-size:9.45px;color:#626262;">L</span>
<span class="t " style="left:286.2px;top:238.20px;font-size:9.45px;color:#626262;letter-spacing:-0.120px;">Office Supplies</span>
<span class="t " style="left:357.2px;top:238.20px;font-size:9.45px;color:#626262;letter-spacing:0.066px;">9/20/2016</span>
<span class="t " style="left:413.6px;top:238.20px;font-size:9.45px;color:#626262;letter-spacing:-0.155px;">Taiwan</span>
<span class="t " style="left:478.3px;top:238.20px;font-size:9.45px;color:#626262;letter-spacing:-0.153px;">Pending</span>
<span class="t " style="left:7.7px;top:252.20px;font-size:9.45px;color:#626262;letter-spacing:-0.242px;">334612929</span>
<span class="t " style="left:61.2px;top:252.20px;font-size:9.45px;color:#626262;letter-spacing:-0.162px;">Asia</span>
<span class="t " style="left:98.5px;top:252.20px;font-size:9.45px;color:#626262;letter-spacing:-0.119px;">Offline</span>
<span class="t " style="left:164.6px;top:252.20px;font-size:9.45px;color:#626262;letter-spacing:0.066px;">10/3/2016</span>
<span class="t " style="left:220.8px;top:252.20px;font-size:9.45px;color:#626262;">H</span>
<span class="t " style="left:286.2px;top:252.20px;font-size:9.45px;color:#626262;letter-spacing:-0.133px;">Personal Care</span>
<span class="t " style="left:357.2px;top:252.20px;font-size:9.45px;color:#626262;letter-spacing:0.066px;">8/17/2016</span>
<span class="t " style="left:413.6px;top:252.20px;font-size:9.45px;color:#626262;letter-spacing:-0.135px;">Indonesia</span>
<span class="t " style="left:478.3px;top:252.20px;font-size:9.45px;color:#626262;letter-spacing:-0.139px;">Cancelled</span>
<span class="t " style="left:7.7px;top:266.20px;font-size:9.45px;color:#626262;letter-spacing:-0.242px;">801093709</span>
<span class="t " style="left:61.2px;top:266.20px;font-size:9.45px;color:#626262;letter-spacing:-0.162px;">Asia</span>
<span class="t " style="left:98.5px;top:266.20px;font-size:9.45px;color:#626262;letter-spacing:-0.119px;">Offline</span>
<span class="t " style="left:164.6px;top:266.20px;font-size:9.45px;color:#626262;letter-spacing:0.066px;">10/5/2013</span>
<span class="t " style="left:220.8px;top:266.20px;font-size:9.45px;color:#626262;">M</span>
<span class="t " style="left:286.2px;top:266.20px;font-size:9.45px;color:#626262;letter-spacing:-0.185px;">Meat</span>
<span class="t " style="left:357.2px;top:266.20px;font-size:9.45px;color:#626262;letter-spacing:0.066px;">8/22/2013</span>
<span class="t " style="left:413.6px;top:266.20px;font-size:9.45px;color:#626262;letter-spacing:-0.114px;">Tajikistan</span>
<span class="t " style="left:478.3px;top:266.20px;font-size:9.45px;color:#626262;letter-spacing:-0.153px;">On Hold</span>
</div>
<div class="a " style="left:523.5px;top:468.0px;width:530.0px;height:5.2px;background:#aaa8a6;border-radius:1px"></div>
<div class="a " style="left:518.3px;top:191.3px;width:13.0px;height:4.4px;background:#9d9b99"></div>
<div class="a " style="left:518.3px;top:191.3px;width:4.4px;height:12.6px;background:#9d9b99"></div>
<div class="a " style="left:1053.0px;top:191.3px;width:13.0px;height:4.2px;background:#9d9b99"></div>
<div class="a " style="left:1061.8px;top:191.3px;width:4.2px;height:12.6px;background:#9d9b99"></div>
<div class="a " style="left:1054.8px;top:195.6px;width:5.4px;height:5.8px;background:#b9b7b5;border-radius:50%"></div>
<div class="a " style="left:518.3px;top:473.2px;width:13.0px;height:4.4px;background:#9d9b99"></div>
<div class="a " style="left:518.3px;top:465.0px;width:4.4px;height:12.6px;background:#9d9b99"></div>
<div class="a " style="left:1053.0px;top:473.2px;width:13.0px;height:4.4px;background:#9d9b99"></div>
<div class="a " style="left:1061.6px;top:465.0px;width:4.4px;height:12.6px;background:#9d9b99"></div>
<div class="a " style="left:783.8px;top:191.3px;width:15.8px;height:4.4px;background:#9d9b99"></div>
<div class="a " style="left:783.8px;top:473.2px;width:15.8px;height:4.4px;background:#9d9b99"></div>
<div class="a " style="left:518.3px;top:327.3px;width:4.4px;height:14.6px;background:#9d9b99"></div>
<div class="a " style="left:1061.6px;top:327.3px;width:4.4px;height:14.6px;background:#9d9b99"></div>
<svg class="a" style="left:1232.5px;top:165.0px;" width="17" height="17" viewBox="0 0 17 17" fill="none"><path d="M1.5 1.6 H15.4 L10 8.2 V14.8 H6.9 V8.2 Z" stroke="#323130" stroke-width="1.25" stroke-linejoin="round" transform="rotate(90 8.5 8.5)"/></svg>
<span class="t" style="left:1245.63px;top:190.70px;font-size:20.00px;color:#252423;-webkit-text-stroke:0.45px #252423;letter-spacing:0.676px;transform-origin:0 0;transform:rotate(90deg)">Filters</span>
<span class="t" style="left:1289.53px;top:163.40px;font-size:20.00px;color:#252423;-webkit-text-stroke:0.45px #252423;letter-spacing:0.660px;transform-origin:0 0;transform:rotate(90deg)">Visualizations</span>
<svg class="a" style="left:1274.0px;top:126.8px;" width="18" height="18" viewBox="0 0 18 18" fill="none"><path d="M8.8 1.4 L1.5 8.9 L8.8 16.4 M16.2 1.4 L8.9 8.9 L16.2 16.4" stroke="#252423" stroke-width="1.35" stroke-linecap="round" stroke-linejoin="round"/></svg>
<span class="t " style="left:1316.3px;top:125.97px;font-size:20.00px;color:#252423;letter-spacing:0.451px;-webkit-text-stroke:0.5px #252423;">Data</span>
<svg class="a" style="left:1516.5px;top:126.5px;" width="20" height="18" viewBox="0 0 20 18" fill="none"><path d="M1.8 1.5 L8.6 8.9 L1.8 16.3 M9.4 1.5 L16.2 8.9 L9.4 16.3" stroke="#252423" stroke-width="1.35" stroke-linecap="round" stroke-linejoin="round"/></svg>
<div class="a " style="left:1311.8px;top:170.5px;width:225.4px;height:31.4px;background:#fff;border:1px solid #d1d1d1;border-bottom:1.4px solid #616161;border-radius:4.5px"></div>
<svg class="a" style="left:1327.0px;top:176.0px;" width="22" height="21" viewBox="0 0 22 21" fill="none"><circle cx="9" cy="8.2" r="6.75" stroke="#605e5c" stroke-width="1.3"/><path d="M13.9 13.1 L19.9 18.7" stroke="#605e5c" stroke-width="1.4" stroke-linecap="round"/></svg>
<span class="t " style="left:1355.6px;top:178.29px;font-size:18.20px;color:#605e5c;letter-spacing:-0.532px;">Search</span>
<div class="a " style="left:1529.0px;top:213.0px;width:7.0px;height:346.0px;background:#c8c6c4"></div>
<div class="a " style="left:1312.7px;top:500.8px;width:215.3px;height:32.2px;background:#e0e0e0;border-radius:5px;overflow:hidden"><div class="a" style="left:0;top:0;width:5.4px;height:100%;background:#117865"></div></div>
<svg class="a" style="left:1323.0px;top:225.1px;" width="16" height="11" viewBox="0 0 16 11" fill="none"><path d="M1.2 1.5 L7.9 8.6 L14.6 1.5" stroke="#484644" stroke-width="1.2" stroke-linecap="round" stroke-linejoin="round"/></svg>
<svg class="a" style="left:1344.0px;top:222.0px;" width="18" height="18" viewBox="0 0 18 18" fill="none"><rect x="1.6" y="0.8" width="14.6" height="14.5" rx="3" stroke="#252423" stroke-width="1.45"/><path d="M1.6 5.3 H16.2 M1.6 10.9 H16.2 M6.1 0.8 V15.3 M11.8 0.8 V15.3" stroke="#252423" stroke-width="1.3"/></svg>
<span class="t " style="left:1368.0px;top:223.58px;font-size:15.50px;color:#3a3938;letter-spacing:0.039px;">Order Status</span>
<div class="a " style="left:1364.5px;top:253.6px;width:15.6px;height:15.6px;background:#fff;border:1px solid #a6a4a2;border-radius:3px"></div>
<span class="t " style="left:1414.6px;top:254.68px;font-size:15.50px;color:#3a3938;letter-spacing:0.153px;">Order ID</span>
<div class="a " style="left:1364.5px;top:285.5px;width:15.6px;height:15.6px;background:#fff;border:1px solid #a6a4a2;border-radius:3px"></div>
<span class="t " style="left:1414.4px;top:287.08px;font-size:15.50px;color:#3a3938;letter-spacing:-0.288px;">Status</span>
<svg class="a" style="left:1323.0px;top:320.7px;" width="16" height="11" viewBox="0 0 16 11" fill="none"><path d="M1.2 1.5 L7.9 8.6 L14.6 1.5" stroke="#484644" stroke-width="1.2" stroke-linecap="round" stroke-linejoin="round"/></svg>
<svg class="a" style="left:1344.0px;top:317.9px;" width="18" height="18" viewBox="0 0 18 18" fill="none"><rect x="1.6" y="0.8" width="14.6" height="14.5" rx="3" stroke="#252423" stroke-width="1.45"/><path d="M1.6 5.3 H16.2 M1.6 10.9 H16.2 M6.1 0.8 V15.3 M11.8 0.8 V15.3" stroke="#252423" stroke-width="1.3"/></svg>
<span class="t " style="left:1368.0px;top:319.08px;font-size:15.50px;color:#3a3938;letter-spacing:-0.358px;">Sales Records</span>
<svg class="a" style="left:1352.3px;top:325.2px;" width="17" height="17" viewBox="0 0 17 17" fill="none"><circle cx="8.5" cy="8.5" r="8" fill="#117865"/><path d="M5.6 8.7 L7.7 10.7 L11.4 6.7" stroke="#fff" stroke-width="1.5" stroke-linecap="round" stroke-linejoin="round"/></svg>
<svg class="a" style="left:1364.5px;top:349.5px" width="15.4" height="15.4" viewBox="0 0 16 16" fill="none"><rect x="0.5" y="0.5" width="15" height="15" rx="2.6" fill="#117865" stroke="#0f6e5c"/><path d="M3.6 8.4 L6.7 11.4 L12.6 4.8" stroke="#fff" stroke-width="1.5" stroke-linecap="round" stroke-linejoin="round"/></svg>
<span class="t " style="left:1414.5px;top:350.88px;font-size:15.50px;color:#3a3938;letter-spacing:0.288px;">Country</span>
<svg class="a" style="left:1364.5px;top:381.5px" width="15.4" height="15.4" viewBox="0 0 16 16" fill="none"><rect x="0.5" y="0.5" width="15" height="15" rx="2.6" fill="#117865" stroke="#0f6e5c"/><path d="M3.6 8.4 L6.7 11.4 L12.6 4.8" stroke="#fff" stroke-width="1.5" stroke-linecap="round" stroke-linejoin="round"/></svg>
<span class="t " style="left:1414.5px;top:382.88px;font-size:15.50px;color:#3a3938;letter-spacing:0.128px;">Item Type</span>
<svg class="a" style="left:1364.5px;top:413.5px" width="15.4" height="15.4" viewBox="0 0 16 16" fill="none"><rect x="0.5" y="0.5" width="15" height="15" rx="2.6" fill="#117865" stroke="#0f6e5c"/><path d="M3.6 8.4 L6.7 11.4 L12.6 4.8" stroke="#fff" stroke-width="1.5" stroke-linecap="round" stroke-linejoin="round"/></svg>
<span class="t " style="left:1414.5px;top:414.88px;font-size:15.50px;color:#3a3938;letter-spacing:0.204px;">Order Date</span>
<svg class="a" style="left:1364.5px;top:445.5px" width="15.4" height="15.4" viewBox="0 0 16 16" fill="none"><rect x="0.5" y="0.5" width="15" height="15" rx="2.6" fill="#117865" stroke="#0f6e5c"/><path d="M3.6 8.4 L6.7 11.4 L12.6 4.8" stroke="#fff" stroke-width="1.5" stroke-linecap="round" stroke-linejoin="round"/></svg>
<span class="t " style="left:1414.5px;top:446.88px;font-size:15.50px;color:#3a3938;letter-spacing:0.153px;">Order ID</span>
<svg class="a" style="left:1364.5px;top:477.5px" width="15.4" height="15.4" viewBox="0 0 16 16" fill="none"><rect x="0.5" y="0.5" width="15" height="15" rx="2.6" fill="#117865" stroke="#0f6e5c"/><path d="M3.6 8.4 L6.7 11.4 L12.6 4.8" stroke="#fff" stroke-width="1.5" stroke-linecap="round" stroke-linejoin="round"/></svg>
<span class="t " style="left:1414.5px;top:478.88px;font-size:15.50px;color:#3a3938;letter-spacing:0.204px;">Order Priority</span>
<svg class="a" style="left:1364.5px;top:509.5px" width="15.4" height="15.4" viewBox="0 0 16 16" fill="none"><rect x="0.5" y="0.5" width="15" height="15" rx="2.6" fill="#117865" stroke="#0f6e5c"/><path d="M3.6 8.4 L6.7 11.4 L12.6 4.8" stroke="#fff" stroke-width="1.5" stroke-linecap="round" stroke-linejoin="round"/></svg>
<span class="t " style="left:1414.5px;top:510.88px;font-size:15.50px;color:#3a3938;letter-spacing:0.039px;">Order Status</span>
<svg class="a" style="left:1364.5px;top:541.5px" width="15.4" height="15.4" viewBox="0 0 16 16" fill="none"><rect x="0.5" y="0.5" width="15" height="15" rx="2.6" fill="#117865" stroke="#0f6e5c"/><path d="M3.6 8.4 L6.7 11.4 L12.6 4.8" stroke="#fff" stroke-width="1.5" stroke-linecap="round" stroke-linejoin="round"/></svg>
<span class="t " style="left:1414.5px;top:542.88px;font-size:15.50px;color:#3a3938;letter-spacing:0.017px;">Region</span>
<svg class="a" style="left:1390.0px;top:508.0px;" width="21" height="21" viewBox="0 0 21 21" fill="none"><path d="M16.8 11 V4 Q16.8 1.5 14.3 1.5 H3.8 Q1.3 1.5 1.3 4 V13.6 Q1.3 16.1 3.8 16.1 H6.3 M5 1.5 V16.1 M5 5.1 H16.8 M10.6 1.5 V5.1" stroke="#252423" stroke-width="1.25" stroke-linecap="round"/><path d="M13.5 7.2 Q10.7 6.1 10.2 9.2 L9.2 17.2 Q8.8 19.9 6.6 19.2 M8 11.2 H12.9" stroke="#252423" stroke-width="1.35" stroke-linecap="round" fill="none"/><path d="M13.6 14.4 L19 19.6 M19 14.4 L13.6 19.6" stroke="#252423" stroke-width="1.6" stroke-linecap="round"/></svg>
</div>
</body></html>
